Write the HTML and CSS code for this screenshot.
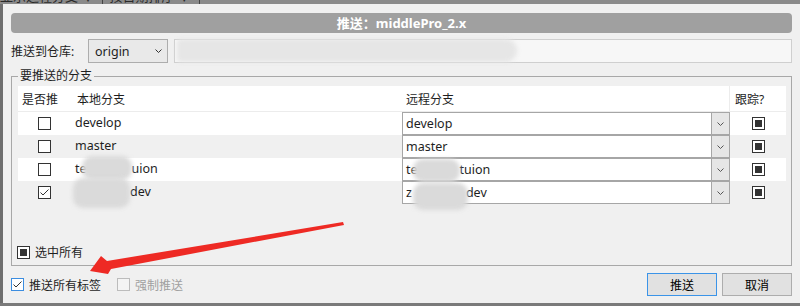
FILE: index.html
```html
<!DOCTYPE html>
<html lang="zh-CN">
<head>
<meta charset="utf-8">
<title>推送</title>
<link rel="stylesheet" href="styles.css">
</head>
<body>
<div class="topstrip">
  <div class="topstrip-inner">
    <span class="ts-item">显示远程分支 ∨</span>
    <span class="ts-item">按日期排序 ∨</span>
  </div>
</div>
<div class="shell">
  <div class="leftedge"></div>
  <div class="dialog">
    <div class="titlebar">推送：middlePro_2.x</div>
    <div class="reporow">
      <span class="label">推送到仓库:</span>
      <div class="combo-origin">
        <span class="combo-text">origin</span>
        <span class="chev"><svg width="7" height="4" viewBox="0 0 7 4"><polyline points="0.5,0.5 3.5,3.5 6.5,0.5" fill="none" stroke="#333" stroke-width="1"/></svg></span>
      </div>
      <div class="urlfield"></div>
    </div>
    <div class="group">
      <div class="group-title">要推送的分支</div>
      <div class="table">
        <div class="row head">
          <div class="h1">是否推</div>
          <div class="h2">本地分支</div>
          <div class="h3">远程分支</div>
          <div class="h4">跟踪?</div>
        </div>
        <div class="row">
          <div class="c1"><span class="cb"></span></div>
          <div class="c2 local">develop</div>
          <div class="c3"><div class="rcombo"><span class="rtext">develop</span><span class="rbtn"><svg width="7" height="4" viewBox="0 0 7 4"><polyline points="0.5,0.5 3.5,3.5 6.5,0.5" fill="none" stroke="#555" stroke-width="1"/></svg></span></div></div>
          <div class="c4"><span class="cb filled"><i></i></span></div>
        </div>
        <div class="row alt">
          <div class="c1"><span class="cb"></span></div>
          <div class="c2 local">master</div>
          <div class="c3"><div class="rcombo"><span class="rtext">master</span><span class="rbtn"><svg width="7" height="4" viewBox="0 0 7 4"><polyline points="0.5,0.5 3.5,3.5 6.5,0.5" fill="none" stroke="#555" stroke-width="1"/></svg></span></div></div>
          <div class="c4"><span class="cb filled"><i></i></span></div>
        </div>
        <div class="row">
          <div class="c1"><span class="cb"></span></div>
          <div class="c2 local">te<span class="gap g45"></span>uion</div>
          <div class="c3"><div class="rcombo"><span class="rtext">te<span class="gap g42"></span>tuion</span><span class="rbtn"><svg width="7" height="4" viewBox="0 0 7 4"><polyline points="0.5,0.5 3.5,3.5 6.5,0.5" fill="none" stroke="#555" stroke-width="1"/></svg></span></div></div>
          <div class="c4"><span class="cb filled"><i></i></span></div>
        </div>
        <div class="row alt">
          <div class="c1"><span class="cb"><svg width="11" height="11" viewBox="0 0 11 11"><polyline points="1.5,5.5 4,8 9.5,2.5" fill="none" stroke="#333" stroke-width="1"/></svg></span></div>
          <div class="c2 local"><span class="gap g55"></span>dev</div>
          <div class="c3"><div class="rcombo"><span class="rtext">z<span class="gap g54"></span>dev</span><span class="rbtn"><svg width="7" height="4" viewBox="0 0 7 4"><polyline points="0.5,0.5 3.5,3.5 6.5,0.5" fill="none" stroke="#555" stroke-width="1"/></svg></span></div></div>
          <div class="c4"><span class="cb filled"><i></i></span></div>
        </div>
      </div>
      <div class="selectall"><span class="cb filled"><i></i></span><span>选中所有</span></div>
    </div>
    <div class="footer">
      <div class="chk-item"><span class="cb focus"><svg width="11" height="11" viewBox="0 0 11 11"><polyline points="1.5,5.5 4,8 9.5,2.5" fill="none" stroke="#333" stroke-width="1"/></svg></span><span>推送所有标签</span></div>
      <div class="chk-item disabled"><span class="cb dis"></span><span>强制推送</span></div>
      <div class="buttons">
        <button class="btn default">推送</button>
        <button class="btn">取消</button>
      </div>
    </div>
  </div>
</div>
<div class="blob b-url"></div>
<div class="blob b-l3"></div>
<div class="blob b-l4"></div>
<div class="blob b-r3"></div>
<div class="blob b-r4"></div>
<svg class="arrow" width="800" height="306" viewBox="0 0 800 306">
  <polygon points="90,271 101,256 107,261 343,222 344,225 111,269 108,274" fill="#ee2a24"/>
</svg>
</body>
</html>
```

FILE: styles.css
```css
* { box-sizing: border-box; }
html, body { margin: 0; padding: 0; }
body {
  width: 800px;
  height: 306px;
  overflow: hidden;
  position: relative;
  background: #7a7a7a;
  font-family: "Noto Sans", "Noto Sans CJK SC", sans-serif;
  font-size: 12px;
  color: #1e1e1e;
}
.topstrip { height: 4px; overflow: hidden; background: #8a8a8a; }
.topstrip-inner {
  margin-top: -11px;
  height: 15px;
  display: flex;
  align-items: center;
  font-size: 13px;
  line-height: 15px;
  color: #2a2a2a;
}
.ts-item { padding: 0 8px 0 0; margin-right: 6px; border-right: 1px solid #444; }
.shell { display: flex; height: 299px; }
.leftedge { width: 3px; background: #6e6e6e; }
.dialog {
  flex: 1;
  background: #f0f0f0;
  padding: 9px 8px 0 8px;
  display: flex;
  flex-direction: column;
}
.titlebar {
  height: 20px;
  border-radius: 4px;
  background: #a0a0a0;
  color: #fff;
  font-weight: bold;
  font-size: 13px;
  line-height: 20px;
  text-align: center;
}
.reporow { margin-top: 6px; height: 24px; display: flex; align-items: center; }
.label { width: 77px; font-size: 12px; }
.combo-origin {
  width: 80px;
  height: 24px;
  border: 1px solid #adadad;
  background: #e9e9e9;
  display: flex;
  align-items: center;
  padding-left: 6px;
  font-size: 12.5px;
}
.combo-text { flex: 1; }
.chev { width: 18px; display: flex; justify-content: center; align-items: center; }
.urlfield {
  flex: 1;
  margin-left: 6px;
  height: 24px;
  border: 1px solid #cfcfcf;
  background: #f7f7f7;
}
.group {
  margin-top: 13px;
  height: 190px;
  border: 1px solid #a8a8a8;
  padding: 0 5px 0 6px;
  display: flex;
  flex-direction: column;
}
.group-title {
  margin-top: -10px;
  height: 18px;
  line-height: 18px;
  width: fit-content;
  padding: 0 2px;
  background: #f0f0f0;
}
.table { margin-top: 1px; }
.row {
  display: grid;
  grid-template-columns: 52px 332px 328px 56px;
  height: 23px;
  background: #fff;
}
.row.alt { background: #f0f0f0; }
.row.head { height: 26px; border-bottom: 1px solid #ececec; }
.row > div { display: flex; align-items: center; min-width: 0; }
.h1 { padding-left: 4px; }
.h2 { padding-left: 7px; }
.h3 { padding-left: 4px; border-right: 1px solid #ececec; }
.h4 { padding-left: 5px; }
.c1 { justify-content: center; }
.c4 { justify-content: center; }
.local { padding-left: 5px; padding-bottom: 3px; font-size: 12.5px; }
.gap { display: inline-block; }
.g45 { width: 45px; }
.g42 { width: 42px; }
.g55 { width: 55px; }
.g54 { width: 54px; }
.rcombo {
  width: 100%;
  height: 23px;
  border: 1px solid #a6a6a6;
  background: #fff;
  display: flex;
  align-items: center;
  font-size: 12.5px;
}
.rtext { flex: 1; padding-left: 3px; }
.rbtn {
  width: 18px;
  height: 100%;
  background: #e6e6e6;
  border-left: 1px solid #a6a6a6;
  display: flex;
  align-items: center;
  justify-content: center;
}
.cb {
  width: 13px;
  height: 13px;
  border: 1px solid #333;
  background: #fff;
  display: inline-flex;
  align-items: center;
  justify-content: center;
  flex: none;
}
.cb.filled i { display: block; width: 7px; height: 7px; background: #333; }
.cb.focus { border-color: #3c8de0; }
.cb.dis { border-color: #bcbcbc; background: #f4f4f4; }
.selectall {
  margin-top: auto;
  margin-bottom: 5px;
  margin-left: -1px;
  height: 16px;
  display: flex;
  align-items: center;
  gap: 5px;
}
.footer {
  margin-top: 7px;
  height: 23px;
  display: flex;
  align-items: center;
}
.chk-item { display: flex; align-items: center; gap: 5px; margin-right: 16px; }
.chk-item.disabled { color: #a0a0a0; }
.buttons { margin-left: auto; display: flex; gap: 5px; }
.btn {
  width: 70px;
  height: 23px;
  border: 1px solid #adadad;
  background: #e1e1e1;
  font-family: "Noto Sans CJK SC", "Noto Sans", sans-serif;
  font-size: 12px;
  color: #000;
  padding: 0;
}
.btn.default { border-color: #3b94e8; }
.blob {
  position: absolute;
  background: #dadada;
  filter: blur(2px);
  border-radius: 10px;
}
.b-url { left: 177px; top: 39px; width: 340px; height: 23px; background: #e6e6e6; border-radius: 4px 12px 12px 4px; }
.b-l3 { left: 82px; top: 156px; width: 50px; height: 24px; }
.b-l4 { left: 73px; top: 178px; width: 57px; height: 30px; }
.b-r3 { left: 413px; top: 159px; width: 47px; height: 23px; }
.b-r4 { left: 413px; top: 183px; width: 55px; height: 27px; }
.arrow { position: absolute; left: 0; top: 0; pointer-events: none; }
```
